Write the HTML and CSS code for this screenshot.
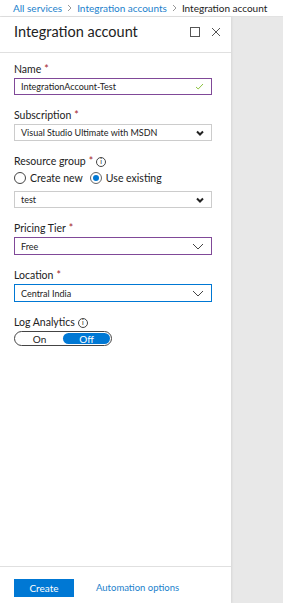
FILE: index.html
```html
<!DOCTYPE html>
<html>
<head>
<title>Integration account</title>
<link rel="stylesheet" href="styles.css">
</head>
<body>

<div class="crumbs">
  <a href="#">All services</a>
  <svg class="sep" width="5" height="8" viewBox="0 0 5 8"><path d="M1 1L4 4L1 7" stroke="#999" stroke-width="1" fill="none"/></svg>
  <a href="#">Integration accounts</a>
  <svg class="sep" width="5" height="8" viewBox="0 0 5 8"><path d="M1 1L4 4L1 7" stroke="#999" stroke-width="1" fill="none"/></svg>
  <span class="here">Integration account</span>
</div>

<div class="main">
  <div class="blade">
    <div class="blade-head">
      <h1>Integration account</h1>
      <div class="head-icons">
        <span class="maxbox"></span>
        <svg width="10" height="10" viewBox="0 0 10 10"><path d="M1 1L9 9M9 1L1 9" stroke="#555" stroke-width="1" fill="none"/></svg>
      </div>
    </div>

    <div class="blade-body">
      <div class="field">
        <div class="label">Name <span class="req">*</span></div>
        <div class="box purple">
          <span>IntegrationAccount-Test</span>
          <svg width="9" height="7" viewBox="0 0 9 7"><path d="M1 4L3.2 6L8 1" stroke="#8cc43f" stroke-width="1" fill="none"/></svg>
        </div>
      </div>

      <div class="field">
        <div class="label">Subscription <span class="req">*</span></div>
        <div class="box">
          <span>Visual Studio Ultimate with MSDN</span>
          <svg width="8" height="6" viewBox="0 0 8 6"><path d="M1 1.5L4 4.5L7 1.5" stroke="#222" stroke-width="2" fill="none"/></svg>
        </div>
      </div>

      <div class="field">
        <div class="label">Resource group <span class="req">*</span> <span class="info">i</span></div>
        <div class="radios">
          <label class="radio"><span class="dot"></span>Create new</label>
          <label class="radio"><span class="dot on"></span>Use existing</label>
        </div>
        <div class="box">
          <span>test</span>
          <svg width="8" height="6" viewBox="0 0 8 6"><path d="M1 1.5L4 4.5L7 1.5" stroke="#222" stroke-width="2" fill="none"/></svg>
        </div>
      </div>

      <div class="field">
        <div class="label">Pricing Tier <span class="req">*</span></div>
        <div class="box purple tall">
          <span>Free</span>
          <svg width="12" height="7" viewBox="0 0 12 7"><path d="M1 1L6 6L11 1" stroke="#444" stroke-width="1" fill="none"/></svg>
        </div>
      </div>

      <div class="field">
        <div class="label">Location <span class="req">*</span></div>
        <div class="box blue tall">
          <span>Central India</span>
          <svg width="12" height="7" viewBox="0 0 12 7"><path d="M1 1L6 6L11 1" stroke="#444" stroke-width="1" fill="none"/></svg>
        </div>
      </div>

      <div class="field">
        <div class="label">Log Analytics <span class="info">i</span></div>
        <div class="toggle">
          <span class="opt">On</span>
          <span class="opt sel">Off</span>
        </div>
      </div>
    </div>

    <div class="blade-foot">
      <button class="create">Create</button>
      <a href="#" class="auto">Automation options</a>
    </div>
  </div>
  <div class="rest"></div>
</div>

</body>
</html>
```

FILE: styles.css
```css
body {
  margin: 0;
  font-family: Lato, "Open Sans", sans-serif;
  color: #222;
  background: #e8e8e8;
  height: 603px;
  display: flex;
  flex-direction: column;
}
a {
  color: #1b7fcc;
  text-decoration: none;
}
.crumbs {
  height: 17px;
  background: #fff;
  border-bottom: 1px solid #e2e2e2;
  font-size: 10px;
  display: flex;
  align-items: center;
  padding-left: 13px;
  white-space: nowrap;
  box-sizing: border-box;
}
.crumbs .sep {
  margin: 0 5px;
}
.crumbs .here {
  color: #222;
}
.main {
  flex: 1;
  display: flex;
}
.blade {
  width: 231px;
  background: #fff;
  display: flex;
  flex-direction: column;
  box-shadow: 1px 0 2px rgba(0, 0, 0, 0.08);
}
.rest {
  flex: 1;
}
.blade-head {
  height: 36px;
  box-sizing: border-box;
  border-bottom: 1px solid #e0e0e0;
  display: flex;
  align-items: center;
  justify-content: space-between;
  padding: 0 10px 6px 14px;
}
.blade-head h1 {
  margin: 0;
  font-size: 14.5px;
  font-weight: normal;
}
.head-icons {
  display: flex;
  align-items: center;
  gap: 11px;
}
.maxbox {
  width: 8px;
  height: 8px;
  border: 1px solid #555;
}
.blade-body {
  flex: 1;
  padding: 10px 19px 0 14px;
}
.field {
  margin-bottom: 14px;
}
.label {
  font-size: 10.5px;
  line-height: 13px;
  margin-bottom: 2px;
  display: flex;
  align-items: center;
}
.req {
  color: #a4262c;
  margin-left: 3px;
}
.info {
  display: inline-flex;
  align-items: center;
  justify-content: center;
  width: 8px;
  height: 8px;
  border: 1px solid #444;
  border-radius: 50%;
  font-size: 7px;
  margin-left: 3px;
}
.box {
  height: 17px;
  border: 1px solid #ccc;
  display: flex;
  align-items: center;
  justify-content: space-between;
  padding: 0 7px 0 6px;
  font-size: 9px;
  box-sizing: border-box;
}
.box.tall {
  height: 18px;
}
.box.purple {
  border-color: #804998;
}
.box.blue {
  border-color: #0078d4;
}
.radios {
  display: flex;
  gap: 7px;
  margin: 4px 0 7px;
}
.radio {
  display: flex;
  align-items: center;
  font-size: 10.5px;
  gap: 4px;
}
.dot {
  width: 12px;
  height: 12px;
  border: 1px solid #444;
  border-radius: 50%;
  box-sizing: border-box;
  position: relative;
}
.dot.on {
  border-color: #666;
}
.dot.on::after {
  content: "";
  position: absolute;
  left: 2px;
  top: 2px;
  width: 6px;
  height: 6px;
  border-radius: 50%;
  background: #0078d4;
}
.toggle {
  width: 98px;
  height: 15px;
  border: 1px solid #444;
  border-radius: 8px;
  display: flex;
  box-sizing: border-box;
  padding: 1px;
  margin-top: 1px;
}
.toggle .opt {
  flex: 1;
  display: flex;
  align-items: center;
  justify-content: center;
  font-size: 10px;
  border-radius: 6px;
}
.toggle .sel {
  background: #0078d4;
  color: #fff;
}
.blade-foot {
  height: 37px;
  box-sizing: border-box;
  border-top: 1px solid #e0e0e0;
  display: flex;
  align-items: flex-start;
  padding: 12px 0 0 14px;
  gap: 22px;
}
.create {
  width: 60px;
  height: 18px;
  background: #0078d4;
  color: #fff;
  border: none;
  font-family: inherit;
  font-size: 10px;
  padding: 0;
}
.auto {
  font-size: 9.5px;
  line-height: 18px;
}
```
